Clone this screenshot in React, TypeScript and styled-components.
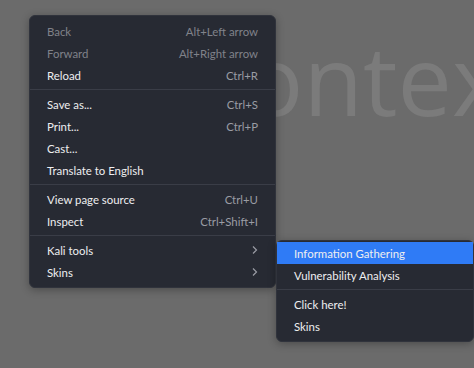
import styled, { createGlobalStyle } from 'styled-components';

const GlobalStyle = createGlobalStyle`
  html, body {
    margin: 0;
    padding: 0;
    background: #6b6b6b;
  }
  body {
    font-family: 'Lato', 'Liberation Sans', sans-serif;
  }
`;

type Entry =
  | { kind: 'item'; label: string; shortcut?: string; disabled?: boolean; sub?: boolean; active?: boolean }
  | { kind: 'sep' };

const mainItems: Entry[] = [
  { kind: 'item', label: 'Back', shortcut: 'Alt+Left arrow', disabled: true },
  { kind: 'item', label: 'Forward', shortcut: 'Alt+Right arrow', disabled: true },
  { kind: 'item', label: 'Reload', shortcut: 'Ctrl+R' },
  { kind: 'sep' },
  { kind: 'item', label: 'Save as...', shortcut: 'Ctrl+S' },
  { kind: 'item', label: 'Print...', shortcut: 'Ctrl+P' },
  { kind: 'item', label: 'Cast...' },
  { kind: 'item', label: 'Translate to English' },
  { kind: 'sep' },
  { kind: 'item', label: 'View page source', shortcut: 'Ctrl+U' },
  { kind: 'item', label: 'Inspect', shortcut: 'Ctrl+Shift+I' },
  { kind: 'sep' },
  { kind: 'item', label: 'Kali tools', sub: true },
  { kind: 'item', label: 'Skins', sub: true },
];

const subItems: Entry[] = [
  { kind: 'item', label: 'Information Gathering', active: true },
  { kind: 'item', label: 'Vulnerability Analysis' },
  { kind: 'sep' },
  { kind: 'item', label: 'Click here!' },
  { kind: 'item', label: 'Skins' },
];

function Chevron() {
  return (
    <svg width="6" height="10" viewBox="0 0 6 10">
      <path d="M1 1.5l3.5 3.5-3.5 3.5" fill="none" stroke="#9a9ca4" strokeWidth="1.2" />
    </svg>
  );
}

function MenuList({ entries }: { entries: Entry[] }) {
  return (
    <>
      {entries.map((e, i) =>
        e.kind === 'sep' ? (
          <Separator key={i} />
        ) : (
          <Item key={i} $disabled={e.disabled} $active={e.active}>
            <span>{e.label}</span>
            {e.shortcut && <Shortcut $disabled={e.disabled}>{e.shortcut}</Shortcut>}
            {e.sub && <Chevron />}
          </Item>
        )
      )}
    </>
  );
}

export default function App() {
  return (
    <>
      <GlobalStyle />
      <Stage>
        <Backdrop>Context Menu</Backdrop>
        <Menu>
          <MenuList entries={mainItems} />
        </Menu>
        <SubMenu>
          <MenuList entries={subItems} />
        </SubMenu>
      </Stage>
    </>
  );
}

const Stage = styled.div`
  position: relative;
  width: 474px;
  height: 368px;
  overflow: hidden;
`;

const Backdrop = styled.div`
  padding: 18px 0 0 184px;
  font-family: 'Open Sans', 'Liberation Sans', sans-serif;
  font-weight: 400;
  font-size: 97px;
  line-height: 120px;
  color: #7b7b7b;
  white-space: nowrap;
`;

const Menu = styled.div`
  position: absolute;
  top: 15px;
  left: 29px;
  width: 247px;
  box-sizing: border-box;
  padding: 4px 0 4px;
  background: #272a33;
  border: 1px solid #30333c;
  border-radius: 6px;
  box-shadow: 0 2px 8px rgba(0, 0, 0, 0.3);
`;

const SubMenu = styled(Menu)`
  top: 240px;
  left: 276px;
  width: 198px;
  padding: 1px 0 4px;
`;

const Item = styled.div<{ $disabled?: boolean; $active?: boolean }>`
  display: flex;
  align-items: center;
  justify-content: space-between;
  height: 22px;
  padding: 0 17px 0 17px;
  font-size: 11.4px;
  color: ${(p) => (p.$disabled ? '#80828a' : '#eeeef0')};
  background: ${(p) => (p.$active ? '#2f7bf6' : 'transparent')};
  white-space: nowrap;
`;

const Shortcut = styled.span<{ $disabled?: boolean }>`
  color: ${(p) => (p.$disabled ? '#80828a' : '#9a9ca4')};
`;

const Separator = styled.div`
  height: 1px;
  margin: 3px 0;
  background: #3a3d47;
`;
